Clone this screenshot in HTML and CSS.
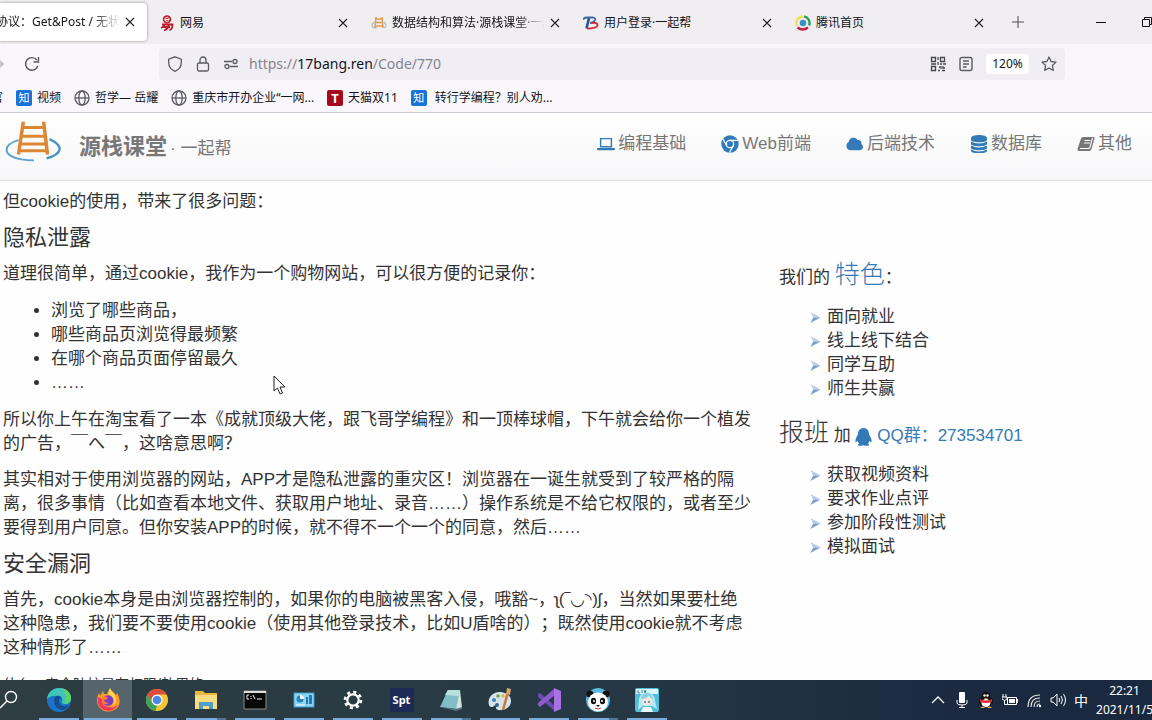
FILE: index.html
```html
<!DOCTYPE html>
<html lang="zh-CN">
<head>
<meta charset="utf-8">
<title>HTTP协议：Get&amp;Post / 无状态</title>
<link rel="stylesheet" href="styles.css">
</head>
<body>
<svg class="defs" aria-hidden="true">
  <symbol id="x" viewBox="0 0 10 10"><path d="M1 1l8 8M9 1L1 9" stroke="#222" stroke-width="1.1" fill="none"/></symbol>
  <symbol id="globe" viewBox="0 0 16 16"><g fill="none" stroke="#5b5b66" stroke-width="1.3"><circle cx="8" cy="8" r="7"/><ellipse cx="8" cy="8" rx="3.2" ry="7"/><path d="M1 8h14"/></g></symbol>
  <symbol id="arrow" viewBox="0 0 12 12"><path d="M1 0l11 6H4z" fill="#b9cdec"/><path d="M4 6h8L1 12z" fill="#7e9fd0"/></symbol>
  <symbol id="ladder" viewBox="0 0 60 44"><path d="M15 20C-2 25-2 36 18 40q6 1 13 1" fill="none" stroke="#5ba3cf" stroke-width="2"/><path d="M47 19c15 7 14 15-3 20" fill="none" stroke="#4b93c0" stroke-width="2.4"/><g stroke="#de8733" stroke-width="3.6" fill="none"><path d="M20 1l-5 34M41 1l4 34"/><path d="M19 7h23M18 16h25M17 24h27M16 31h28" stroke-width="3"/></g></symbol>
</svg>

<header class="browser">
  <div class="tabs">
    <div class="tab tab-active"><span class="tab-title fade">协议：Get&amp;Post / 无状</span><button class="close" aria-label="关闭"><svg><use href="#x"/></svg></button></div>
    <div class="tab">
      <svg class="fav" viewBox="0 0 16 16"><circle cx="8" cy="4.4" r="4.2" fill="#bd1c2b"/><path d="M5.800 4.600h4.300c0-3-4.300-3-4.300 0 0 2.300 3 2.400 4.200 1" stroke="#fff" fill="none"/><path d="M3 9.500h10.500q0 5-3 5.500M6 9.500Q5 12 2 13M10 10q-1 4-5 5.500M3 12h8" stroke="#bd1c2b" stroke-width="1.800" fill="none"/></svg>
      <span class="tab-title">网易</span><button class="close" aria-label="关闭"><svg><use href="#x"/></svg></button></div>
    <div class="tab">
      <svg class="fav" viewBox="0 0 16 16"><path d="M3 7Q-1 11 3 13h3M13 7q4 4 0 6" stroke="#a9bfd0" stroke-width="1.200" fill="none"/><path d="M5 2L4 13M11 2l1 11M5 4h6M5 7.500h6M4 11h8" stroke="#e0994f" stroke-width="1.500" fill="none"/></svg>
      <span class="tab-title fade">数据结构和算法·源栈课堂·一起</span><button class="close" aria-label="关闭"><svg><use href="#x"/></svg></button></div>
    <div class="tab">
      <svg class="fav" viewBox="0 0 16 16"><path d="M0 4.500Q1 2.500 4 2.500h6q4 1 1 4-1 1-4 1.500" stroke="#3c6ba3" stroke-width="1.800" fill="none"/><path d="M6 3L3.500 13.500" stroke="#2c548d" stroke-width="2.600" fill="none"/><path d="M8 8q7-1 6.500 2.500-1 3-10.500 3" stroke="#d72b3d" stroke-width="2" fill="none"/></svg>
      <span class="tab-title">用户登录·一起帮</span><button class="close" aria-label="关闭"><svg><use href="#x"/></svg></button></div>
    <div class="tab">
      <svg class="fav" viewBox="0 0 16 16"><g fill="none" stroke-width="2.400"><path d="M9 1.500a6.500 6.500 0 0 1 5 9" stroke="#2f9d58"/><path d="M2 11Q-.5 3 8 1.500" stroke="#f0df5a"/><path d="M2.500 12.500q5 4 10.500 0" stroke="#c6203f"/></g><circle cx="8" cy="8" r="3.300" fill="#3a91c5"/></svg>
      <span class="tab-title">腾讯首页</span><button class="close" aria-label="关闭"><svg><use href="#x"/></svg></button></div>
    <button class="newtab" aria-label="新建标签页"><svg viewBox="0 0 12 12"><path d="M6 0v12M0 6h12" stroke="#555" stroke-width="1.100"/></svg></button>
    <div class="winctl">
      <button aria-label="最小化"><svg viewBox="0 0 10 10"><path d="M0 5.500h10" stroke="#111"/></svg></button>
      <button aria-label="还原"><svg viewBox="0 0 10 10"><path d="M.5 2.500h7v7h-7zM2.500 2.500v-2h7v7h-2" stroke="#111" fill="none"/></svg></button>
    </div>
  </div>

  <div class="toolbar">
    <button class="fwd" aria-label="前进"><svg viewBox="0 0 8 16"><path d="M-4 8h6M-1 4l4 4-4 4" stroke="#bbb" stroke-width="1.500" fill="none"/></svg></button>
    <button class="reload" aria-label="刷新"><svg viewBox="0 0 16 16"><path d="M13.800 10A6.300 6.300 0 1 1 12.800 4M14.500 1v5h-5" stroke="#55555e" stroke-width="1.400" fill="none"/></svg></button>
    <div class="urlbar">
      <svg class="i16" viewBox="0 0 16 16"><path d="M8 .8l6.300 2.300v3.500c0 4-2.300 7.300-6.300 8.700C4 13.900 1.700 10.600 1.700 6.600V3.100z" fill="none" stroke="#5b5b66" stroke-width="1.300"/></svg>
      <svg class="i16" viewBox="0 0 16 16"><rect x="2.500" y="7" width="11" height="8" rx="1.500" fill="none" stroke="#5b5b66" stroke-width="1.300"/><path d="M5 7V4a3 3 0 0 1 6 0v3" fill="none" stroke="#5b5b66" stroke-width="1.300"/></svg>
      <svg class="i16" viewBox="0 0 16 16"><g fill="none" stroke="#5b5b66" stroke-width="1.300"><path d="M1 5.500h8M7 10.500h8"/><circle cx="12" cy="5.500" r="2"/><circle cx="4" cy="10.500" r="2"/></g></svg>
      <a class="url" href="#">https://<b>17bang.ren</b>/Code/770</a>
      <svg class="i16" viewBox="0 0 16 16"><g fill="none" stroke="#45454d" stroke-width="1.300"><path d="M1.500 1.500h4v4h-4zM10.500 1.500h4v4h-4zM1.500 10.500h4v4h-4z"/><path d="M8 1v3M8 6v3M1 8h5M10 8h2M13 8h3M9 11h2v2M13 10v2h2M8 14.500h2M12 14.500h3" /></g></svg>
      <svg class="i16" viewBox="0 0 16 16"><rect x="2" y="1.500" width="12" height="13" rx="2" fill="none" stroke="#5b5b66" stroke-width="1.400"/><path d="M5 5h6M5 8h6M5 11h3.500" stroke="#5b5b66" stroke-width="1.300"/></svg>
      <button class="zoom">120%</button>
      <svg class="i16" viewBox="0 0 16 16"><path d="M8 1l2.100 4.500 4.900.6-3.600 3.400.9 4.900L8 12l-4.300 2.400.9-4.900L1 6.100l4.900-.6z" fill="none" stroke="#5b5b66" stroke-width="1.300" stroke-linejoin="round"/></svg>
    </div>
  </div>

  <nav class="bookmarks">
    <a class="cut" href="#"><span>官</span></a>
    <a href="#"><span class="badge zhi">知</span>视频</a>
    <a href="#"><svg class="i16"><use href="#globe"/></svg>哲学— 岳耀</a>
    <a href="#"><svg class="i16"><use href="#globe"/></svg>重庆市开办企业“一网...</a>
    <a href="#"><span class="badge tmall">T</span>天猫双11</a>
    <a class="wide" href="#"><span class="badge zhi">知</span>转行学编程？别人劝...</a>
  </nav>
</header>

<div class="site">
  <header class="navbar">
    <a class="brand" href="#"><svg class="logo"><use href="#ladder"/></svg><strong>源栈课堂</strong><small>· 一起帮</small></a>
    <nav class="menu">
      <a href="#"><svg viewBox="0 0 20 18"><path d="M4 3h12v9H4z" fill="none" stroke="#337ab7" stroke-width="1.600"/><path d="M0 13.500h20v1q0 1.500-2 1.500H2q-2 0-2-1.500z" fill="#337ab7"/></svg>编程基础</a>
      <a href="#"><svg viewBox="0 0 18 18"><circle cx="9" cy="9" r="8.700" fill="#337ab7"/><g fill="none" stroke="#fff" stroke-width="1.200"><circle cx="9" cy="9" r="3.700"/><path d="M9 5.300h8M5.600 10.500L2 4M12.300 10.800L8.500 17.500"/></g></svg>Web前端</a>
      <a href="#"><svg viewBox="0 0 20 18"><path d="M5 16a5 5 0 0 1-2-9.300A5.500 5.500 0 0 1 13 4.500a3.500 3.500 0 0 1 4 4.500A3.800 3.800 0 0 1 16 16z" fill="#337ab7"/></svg>后端技术</a>
      <a href="#"><svg viewBox="0 0 18 18"><path d="M1 3c0-4 16-4 16 0v2c0 3-16 3-16 0zM1 6.500q8 4 16 0v2.500c0 3-16 3-16 0zM1 10.500q8 4 16 0V13c0 3-16 3-16 0zM1 14.500q8 4 16 0V16c0 3-16 3-16 0z" fill="#337ab7"/></svg>数据库</a>
      <a href="#"><svg viewBox="0 0 18 18"><path d="M6 2h10.500q1.500 0 1 1.500L14.500 14q-.5 2-2.500 2H2Q0 16 .5 14L4 3.500Q4.500 2 6 2z" fill="#777"/><path d="M7.500 5.500h6M6.800 8h6M3 13.500h8.500q1 0 1.500-1.500l2.500-9" stroke="#fff" stroke-width="1.100" fill="none"/></svg>其他</a>
    </nav>
  </header>

  <main class="content">
    <article class="article">
      <p>但cookie的使用，带来了很多问题：</p>
      <h3>隐私泄露</h3>
      <p>道理很简单，通过cookie，我作为一个购物网站，可以很方便的记录你：</p>
      <ul>
        <li>浏览了哪些商品，</li>
        <li>哪些商品页浏览得最频繁</li>
        <li>在哪个商品页面停留最久</li>
        <li>……</li>
      </ul>
      <p>所以你上午在淘宝看了一本《成就顶级大佬，跟飞哥学编程》和一顶棒球帽，下午就会给你一个植发的广告，￣へ￣，这啥意思啊？</p>
      <p>其实相对于使用浏览器的网站，APP才是隐私泄露的重灾区！浏览器在一诞生就受到了较严格的隔离，很多事情（比如查看本地文件、获取用户地址、录音……）操作系统是不给它权限的，或者至少要得到用户同意。但你安装APP的时候，就不得不一个一个的同意，然后……</p>
      <h3>安全漏洞</h3>
      <p>首先，cookie本身是由浏览器控制的，如果你的电脑被黑客入侵，哦豁~，ʅ(‾◡◝)ʃ，当然如果要杜绝这种隐患，我们要不要使用cookie（使用其他登录技术，比如U盾啥的）；既然使用cookie就不考虑这种情形了……</p>
      <p class="note">什么，安全防护是有权限/效用的</p>
    </article>
    <aside class="side">
      <p>我们的 <a class="big" href="#">特色</a>：</p>
      <ul>
        <li><svg><use href="#arrow"/></svg>面向就业</li>
        <li><svg><use href="#arrow"/></svg>线上线下结合</li>
        <li><svg><use href="#arrow"/></svg>同学互助</li>
        <li><svg><use href="#arrow"/></svg>师生共赢</li>
      </ul>
      <p><span class="big">报班</span> 加 <a href="#"><svg class="qq" viewBox="0 0 17 18"><path d="M8.500 0C4.500 0 3 3 3 6.500 1.500 9 0 11.500.5 14c.5.800 1.500-.5 2-1 .2 1 .8 1.800 1.500 2.500-3 2 1 3 4.500 1.800 3.500 1.200 7.500.2 4.500-1.800.700-.7 1.300-1.500 1.500-2.500.5.500 1.500 1.800 2 1 .5-2.500-1-5-2.500-7.500C14 3 12.500 0 8.500 0z" fill="#337ab7"/></svg> QQ群：273534701</a></p>
      <ul>
        <li><svg><use href="#arrow"/></svg>获取视频资料</li>
        <li><svg><use href="#arrow"/></svg>要求作业点评</li>
        <li><svg><use href="#arrow"/></svg>参加阶段性测试</li>
        <li><svg><use href="#arrow"/></svg>模拟面试</li>
      </ul>
    </aside>
  </main>
</div>

<footer class="taskbar">
  <button class="search" aria-label="搜索"><svg viewBox="0 0 18 20"><circle cx="11" cy="7" r="5.500" fill="none" stroke="#fff" stroke-width="1.400"/><path d="M7 11l-7 7" stroke="#fff" stroke-width="1.400"/></svg></button>
  <div class="apps">
    <button class="app" aria-label="Edge"><svg viewBox="0 0 24 24"><circle cx="12" cy="12" r="12" fill="#1b74c9"/><path d="M0 11C1 4 6 0 12 0c7 0 12 5 12 10 0 4-3 6-6 6s-4-1-3-3 0-5-4-5C6 7 2 9 0 11z" fill="#40c6b8"/><path d="M14 .3C20 1 24 5 24 10c0 4-3 6-6 6 2-6 1-12-4-15.700z" fill="#62d36b"/><path d="M8 9c-3 6 1 13 8 13 3-1 5-3 6-5-5 3-10 0-10-4 0-2 1-3 2-4-2-2-4-1-6 0z" fill="#15508e"/></svg></button>
    <button class="app on" aria-label="Firefox"><svg viewBox="0 0 24 24"><path d="M14 0c1 3 4 4 6 7l1-2c3 5 4 11 0 15S10 25 5 21 0 10 3 5l1 3 3-5 1 3 3 0z" fill="#ff9a2b"/><path d="M2 9c-1 6 1 11 6 13s12 0 14-6c-2 3-6 4-9 3-5 0-8-4-7-8z" fill="#f1385c"/><path d="M14 0c1 4 6 5 6 12 0 3-1 5-3 6 3-5 0-10-5-12z" fill="#ffdb4b"/><circle cx="12" cy="12.500" r="5.300" fill="#7a3bc8"/><path d="M6 9q3-2 6 1-1 2-4 2 1 3 5 3-4 3-7-1z" fill="#ff7a33"/></svg></button>
    <button class="app" aria-label="Chrome"><svg viewBox="0 0 24 24"><circle cx="12" cy="12" r="11" fill="#f6c63a"/><path d="M2.500 6.500A11 11 0 0 1 21.500 6.500H12L7.200 14.800z" fill="#de4b3c"/><path d="M2.500 6.500l4.800 8.300L12 17.500l-1.500 5.400A11 11 0 0 1 2.500 6.500z" fill="#3ba35b"/><circle cx="12" cy="12" r="5.500" fill="#fff"/><circle cx="12" cy="12" r="4.300" fill="#4a88e4"/></svg></button>
    <button class="app multi" aria-label="文件资源管理器"><svg viewBox="0 0 24 24"><path d="M1 3h8l2 2h12v16H1z" fill="#e8b83f"/><path d="M1 7h22v14H1z" fill="#f8dc7f"/><path d="M5 21v-7h14v7h-4v-3H9v3z" fill="#4d9fc9"/></svg></button>
    <button class="app" aria-label="命令提示符"><svg viewBox="0 0 24 24"><path d="M1 3h22v18H1z" fill="#080808" stroke="#8b8b8b"/><path d="M1 3h22v2H1z" fill="#ddd"/><path d="M6 7H4v4h2M8 8v1M8 10v1M10 7l2 4M14 11h5" stroke="#eee" fill="none"/></svg></button>
    <button class="app" aria-label="控制面板"><svg viewBox="0 0 24 24"><path d="M2 5h20v14H2z" fill="#8bd4f3" stroke="#3e9fd0"/><circle cx="8" cy="11" r="3.500" fill="#2784bd"/><path d="M8 11V7a4 4 0 0 1 4 4z" fill="#fff"/><path d="M14 9h2v7h-2zM17 7h3v9h-3z" fill="#2879b2"/><path d="M4 17h9" stroke="#fff"/></svg></button>
    <button class="app" aria-label="设置"><svg viewBox="0 0 24 24"><circle cx="12" cy="12" r="5.700" fill="none" stroke="#fff" stroke-width="2.200"/><circle cx="12" cy="12" r="7.900" fill="none" stroke="#fff" stroke-width="2.800" stroke-dasharray="3.102 3.102"/></svg></button>
    <button class="app" aria-label="Spt"><span class="spt">Spt</span></button>
    <button class="app multi" aria-label="记事本"><svg viewBox="0 0 24 24"><path d="M9 2h12l2 18-5 2z" fill="#d5e2de"/><path d="M9 2h12l-4 19L1 19z" fill="#83bdc5"/><path d="M9 2h12l-1 6-14-1z" fill="#b9dfdf"/><path d="M1 19l16 2 6-2v2l-6 2z" fill="#52747a"/></svg></button>
    <button class="app" aria-label="画图"><svg viewBox="0 0 24 24"><path d="M13 4C4 3-1 11 1 17c1 3 4 2 5 1s3 0 2 2c0 4 15 3 15-7 0-5-4-8-10-9z" fill="#d8e3ea"/><circle cx="6" cy="12" r="2" fill="#3f83bd"/><circle cx="10" cy="8" r="1.800" fill="#69a84f"/><circle cx="15" cy="8" r="1.800" fill="#e1b93d"/><circle cx="9" cy="17" r="2" fill="#3a6390"/><path d="M20 4l-5 18" stroke="#c27b3d" stroke-width="2.500"/><path d="M18 6l1-6 4 1-1 6z" fill="#d7a46c"/></svg></button>
    <button class="app" aria-label="Visual Studio"><svg viewBox="0 0 24 24"><path d="M1 6l2-1 15 13v5L1 9z" fill="#7048b8"/><path d="M1 17l2 2L18 7V0L1 15z" fill="#8e5bce"/><path d="M17 0l7 3v18l-7 3z" fill="#a873e0"/></svg></button>
    <button class="app multi" aria-label="熊猫"><svg viewBox="0 0 24 24"><circle cx="12" cy="12" r="12" fill="#5ab7e2"/><circle cx="4" cy="6" r="3.500" fill="#111"/><circle cx="20" cy="6" r="3.500" fill="#111"/><ellipse cx="12" cy="14" rx="10" ry="9.500" fill="#fff"/><ellipse cx="7.500" cy="13" rx="2.600" ry="3.300" fill="#111"/><ellipse cx="16.500" cy="13" rx="2.600" ry="3.300" fill="#111"/><circle cx="8" cy="13" r="1" fill="#fff"/><circle cx="16" cy="13" r="1" fill="#fff"/><path d="M10 17h4l-2 2z" fill="#111"/><path d="M9 20q3 2 6 0" stroke="#c33" fill="none"/></svg></button>
    <button class="app" aria-label="Live"><svg viewBox="0 0 24 24"><rect width="24" height="24" rx="2" fill="#51bfd9"/><path d="M1 1h22v5H1z" fill="#dcf5fa"/><path d="M3 2v3h2M7 2v3M9 2l1 3 1-3" stroke="#378fab" fill="none"/><path d="M4 12q0-7 8-7t8 8l2 8-5-3H8l-5 4z" fill="#b5e8f2"/><ellipse cx="12" cy="13" rx="5" ry="4.500" fill="#f9e6df"/><path d="M6 11q6 0 8-4 1 3 4 4-1-6-6-6t-6 6z" fill="#84cfe2"/><path d="M10 13v2M14 13v2" stroke="#26577c" stroke-width="1.200"/><path d="M8 19h8l2 5H6z" fill="#e8fafc"/></svg></button>
  </div>
  <div class="tray">
    <svg viewBox="0 0 16 16"><path d="M2 11l6-6 6 6" stroke="#fff" stroke-width="1.300" fill="none"/></svg>
    <svg viewBox="0 0 16 16"><rect x="5" y="0" width="6" height="11" rx="1" fill="#fff"/><path d="M3 8v3q0 2 5 2t5-2V8M8 13v3M5 15.500h6" stroke="#fff" fill="none"/></svg>
    <svg viewBox="0 0 16 16"><ellipse cx="8" cy="9.500" rx="7" ry="5.500" fill="#111"/><ellipse cx="8" cy="5" rx="4.500" ry="5" fill="#111"/><ellipse cx="8" cy="11" rx="4.500" ry="4" fill="#fff"/><path d="M2 7q6 3 12 0v3q-6 2-12 0z" fill="#d92b35"/><circle cx="6.500" cy="3.500" r="1.200" fill="#fff"/><circle cx="9.500" cy="3.500" r="1.200" fill="#fff"/><path d="M5.500 6h5L8 7z" fill="#f3b32c"/><path d="M2 16q3-3 5 0zM9 16q3-3 5 0z" fill="#f3b32c"/></svg>
    <svg viewBox="0 0 16 16"><path d="M5.500 5.500h9v7h-9z" stroke="#fff" fill="none"/><path d="M7 7h6v4H7z" fill="#fff"/><path d="M15.500 7v4M1 2v3M4 2v3M0 5h5v2q-2.500 3-5 0zM2.500 8v4.500h3" stroke="#fff" fill="none"/></svg>
    <svg viewBox="0 0 16 16"><g fill="none" stroke="#ddd" stroke-width="1.200"><path d="M2 15Q2 3 14 3"/><path d="M5 15q0-9 9-9"/><path d="M8 15q0-6 6-6"/><path d="M11 15q0-3 3-3"/></g><circle cx="14" cy="14" r="1.200" fill="#fff"/></svg>
    <svg viewBox="0 0 16 16"><path d="M1 6h2l4-4v12l-4-4H1zM9 6q1.500 2 0 4M11 4q3 4 0 8M13.500 2q4 6 0 12" stroke="#fff" fill="none"/></svg>
    <span class="ime">中</span>
    <div class="clock"><time>22:21</time><time>2021/11/5</time></div>
  </div>
</footer>
<svg class="cursor" viewBox="0 0 13 20"><path d="M1 1v15l3.500-3 2.500 6 2.500-1L7 12h5z" fill="#fff" stroke="#222"/></svg>
</body>
</html>
```
FILE: styles.css
```css
* { box-sizing: border-box; }
body {
  margin: 0;
  height: 100vh;
  display: flex;
  flex-direction: column;
  overflow: hidden;
  position: relative;
  background: #fefefe;
  color: #333;
  font: 17px/24px "Liberation Sans", "Noto Sans CJK SC", sans-serif;
  text-spacing-trim: space-all;
}
a { color: inherit; text-decoration: none; }
button { border: 0; padding: 0; background: none; font: inherit; color: inherit; display: grid; place-items: center; }
svg { display: block; flex: none; }
.defs { position: absolute; width: 0; height: 0; }
.i16 { width: 16px; height: 16px; }

.browser { flex: none; font: 12px/16px "Noto Sans", "Noto Sans CJK SC", sans-serif; color: #15141a; background: #f9f7fc; border-bottom: 1px solid #cdc7d1; }
.tabs { display: flex; height: 44px; background: #f0eef1; overflow: hidden; }
.tab { flex: none; width: 212px; display: flex; align-items: center; gap: 5px; padding: 1px 12px 0 11px; }
.tab-active { width: 147px; margin: 3px 1px 3px 0; padding: 0 12px 0 0; justify-content: flex-end; background: #fff; border-radius: 0 4px 4px 0; box-shadow: 0 0 3px #888; }
.tab-active .tab-title { flex: none; }
.tab-title { flex: 1; min-width: 0; overflow: hidden; white-space: nowrap; }
.fade { mask-image: linear-gradient(to left, transparent, #000 28px); }
.fav { width: 16px; height: 16px; }
.close svg { width: 10px; height: 10px; }
.newtab { width: 44px; }
.newtab svg { width: 12px; height: 12px; }
.winctl { display: flex; margin-left: auto; margin-right: -18px; }
.winctl button { width: 46px; }
.winctl svg { width: 10px; height: 10px; }

.toolbar { display: flex; align-items: center; padding: 4px 87px 1px 0; }
.fwd { width: 24px; justify-items: start; }
.fwd svg { width: 8px; height: 16px; }
.reload { width: 16px; margin-right: 119px; }
.reload svg { width: 16px; height: 16px; }
.urlbar { flex: 1; height: 32px; display: flex; align-items: center; gap: 12px; padding: 0 8px; background: #f0eef4; border-radius: 4px; }
.url { flex: 1; font-size: 14px; color: #85848c; margin-left: -2px; }
.url b { font-weight: 400; color: #15141a; }
.zoom { width: 43px; height: 20px; background: #fff; border-radius: 4px; font-size: 12px; }

.bookmarks { display: flex; align-items: center; height: 31px; gap: 13px; padding-top: 3px; white-space: nowrap; }
.bookmarks a { display: flex; align-items: center; gap: 5px; }
.bookmarks .cut { width: 3px; justify-content: flex-end; overflow: hidden; }
.bookmarks .wide { gap: 8px; }
.badge { width: 16px; height: 16px; border-radius: 2px; color: #fff; display: grid; place-items: center; font-size: 11px; line-height: 16px; }
.zhi { background: #1772d9; }
.tmall { background: #a5091c; font-weight: 700; font-size: 13px; }

.site { flex: 1; min-height: 0; overflow: hidden; }
.navbar { display: flex; justify-content: space-between; padding: 7px 20px 0 4px; height: 68px; background: linear-gradient(#fff, #f7f6f8); border-bottom: 1px solid #e6dce8; color: #777; white-space: nowrap; }
.brand { display: flex; align-items: center; height: 54px; }
.logo { width: 58px; height: 44px; margin: 0 17px 10px 0; }
.brand strong { font-size: 22px; line-height: 32px; }
.brand small { font-size: 17px; line-height: 28px; margin-left: 3px; padding-top: 4px; }
.menu { display: flex; align-items: center; gap: 35px; height: 48px; }
.menu a { display: flex; align-items: center; gap: 3px; }
.menu svg { width: 18px; height: 18px; }

.content { display: grid; grid-template-columns: 2fr 1fr; }
.article { padding: 9px 16px 0 3px; }
.content p { margin: 0 0 12px; }
.content h3 { margin: 0 0 12px; font-size: 22px; line-height: 24px; font-weight: 400; }
.content ul { margin: 0 0 12px; padding: 1px 0 1px 48px; }
.content .note { font-size: 14px; }
.side { padding: 73px 12px 0 11px; }
.content .side p { margin-bottom: 14px; }
.side a { color: #337ab7; }
.side .big { font-size: 25px; font-weight: 300; font-family: "Noto Sans CJK SC", sans-serif; line-height: 36px; }
.side .qq { display: inline-block; width: 17px; height: 18px; vertical-align: middle; }
.content .side ul { margin-bottom: 10px; list-style: none; padding-left: 30px; }
.side li { display: flex; align-items: center; gap: 6px; }
.side li svg { width: 12px; height: 11px; }

.taskbar { flex: none; height: 40px; display: flex; justify-content: space-between; background: linear-gradient(90deg, #2d3d41, #263944 50%, #1b2940 85%); color: #fff; font: 12px/19px "Noto Sans", "Noto Sans CJK SC", sans-serif; overflow: hidden; }
.search { width: 34px; justify-items: start; }
.search svg { width: 18px; height: 20px; }
.apps { display: flex; flex: 1; }
.app { width: 49px; background: linear-gradient(#79abdc, #79abdc) center bottom / 40px 2px no-repeat; }
.multi { background: linear-gradient(90deg, #79abdc 31px, #527596 31px) center bottom / 40px 2px no-repeat; }
.on { background: linear-gradient(#79abdc, #79abdc) center bottom / 48px 2px no-repeat, #56656b; }
.app svg { width: 24px; height: 24px; }
.spt { width: 24px; height: 24px; background: #1d2a55; font-size: 11px; font-weight: 700; line-height: 24px; text-align: center; }
.tray { display: flex; align-items: center; gap: 8px; margin-right: -1px; }
.tray svg { width: 16px; height: 16px; }
.ime { font-size: 14px; }
.clock { display: flex; flex-direction: column; align-items: center; }
.clock time { white-space: nowrap; }
.cursor { position: absolute; left: 273px; top: 375px; width: 13px; height: 20px; }
```
